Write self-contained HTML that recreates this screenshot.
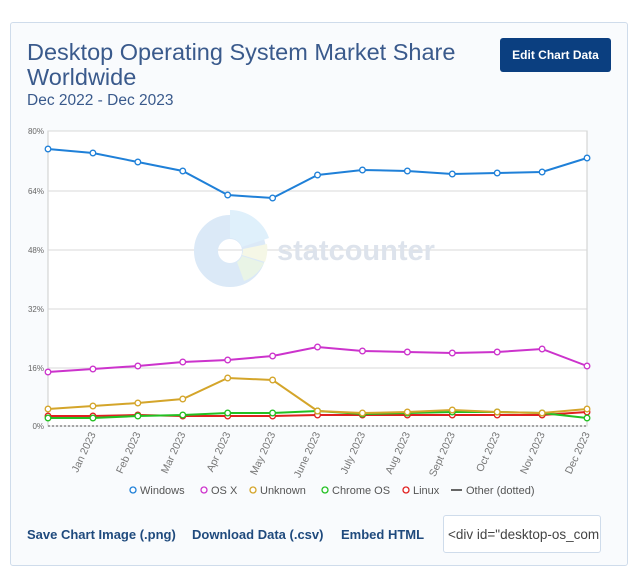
<!DOCTYPE html>
<html><head><meta charset="utf-8"><style>
body{margin:0;width:640px;height:576px;background:#fff;font-family:"Liberation Sans",sans-serif;position:relative;overflow:hidden}
.card{position:absolute;left:10px;top:22px;width:616px;height:542px;background:#f9fbfd;border:1px solid #cfdceb;border-radius:3px}
h1{position:absolute;left:27px;top:40px;margin:0;font-weight:normal;font-size:23.5px;line-height:25px;color:#3a5a8c;width:460px}
.sub{position:absolute;left:27px;top:92px;font-size:15.5px;color:#3a5a8c}
.btn{position:absolute;left:500px;top:38px;width:111px;height:34px;background:#0b3f80;border-radius:3px;color:#fff;font-weight:bold;font-size:12px;line-height:34px;text-align:center}
.lnk{position:absolute;top:527px;font-weight:bold;font-size:13px;color:#1f4a7d}
.emb{position:absolute;left:443px;top:515px;width:158px;height:38px;background:#fff;border:1px solid #cfdceb;border-radius:3px;font-size:13.5px;color:#444;line-height:38px;padding-left:4px;overflow:hidden;white-space:nowrap;box-sizing:border-box}
svg{position:absolute;left:0;top:0}
</style></head><body>
<div class="card"></div>
<h1>Desktop Operating System Market Share Worldwide</h1>
<div class="sub">Dec 2022 - Dec 2023</div>
<div class="btn">Edit Chart Data</div>
<svg id="s" width="640" height="576" font-family="Liberation Sans, sans-serif"></svg>
<div class="lnk" style="left:27px">Save Chart Image (.png)</div>
<div class="lnk" style="left:192px">Download Data (.csv)</div>
<div class="lnk" style="left:341px">Embed HTML</div>
<div class="emb">&lt;div id="desktop-os_comb</div>
<script>
var s='';
s+='<rect x="48" y="131" width="539" height="295" fill="#fff" stroke="#ccc"/>';
[[80,131],[64,191],[48,250],[32,309],[16,368],[0,426]].forEach(function(g){
 s+='<line x1="48" x2="587" y1="'+g[1]+'" y2="'+g[1]+'" stroke="#d8d8d8"/>';
 s+='<text x="44" y="'+(g[1]+3)+'" font-size="8" fill="#666" text-anchor="end">'+g[0]+'%</text>';});
s+='<circle cx="230" cy="251" r="24" fill="none" stroke="#dbe9f7" stroke-width="24"/>';
s+='<path d="M230 210 A41 41 0 0 1 269 238 L242 247 A13 13 0 0 0 230 238Z" fill="#dff0fb"/>';
s+='<path d="M267 244 A37 37 0 0 1 265 262 L242 255 A13 13 0 0 0 243 249Z" fill="#f5f7e6"/>';
s+='<path d="M264 263 A37 37 0 0 1 244 281 L237 262 A13 13 0 0 0 242 256Z" fill="#e9f4e6"/>';
s+='<text x="277" y="260" font-size="29" font-weight="bold" fill="#dde3ec">statcounter</text>';
s+='<line x1="48" x2="587" y1="426" y2="426" stroke="#888" stroke-dasharray="2,2" stroke-width="1.5"/>';
var X=function(i){return 48+i*44.92};
var series=[
['#e02020',[416,416,415,416,416,416,415,415,415,415,415,415,412]],
['#22c022',[418,418,416,415,413,413,411,414,413,412,412,413,418]],
['#d4a52a',[409,406,403,399,378,380,411,413,412,410,412,413,409]],
['#cc33cc',[372,369,366,362,360,356,347,351,352,353,352,349,366]],
['#1f80d8',[149,153,162,171,195,198,175,170,171,174,173,172,158]]];
series.forEach(function(se){
 var p=se[1].map(function(y,i){return X(i).toFixed(1)+','+y}).join(' ');
 s+='<polyline points="'+p+'" fill="none" stroke="'+se[0]+'" stroke-width="2"/>';
 se[1].forEach(function(y,i){s+='<circle cx="'+X(i)+'" cy="'+y+'" r="2.8" fill="#fff" stroke="'+se[0]+'" stroke-width="1.3"/>';});
});
var m=['Jan 2023','Feb 2023','Mar 2023','Apr 2023','May 2023','June 2023','July 2023','Aug 2023','Sept 2023','Oct 2023','Nov 2023','Dec 2023'];
m.forEach(function(t,i){var x=X(i+1)+3,y=434;
 s+='<text x="'+x+'" y="'+y+'" font-size="10.5" fill="#777" text-anchor="end" transform="rotate(-65 '+x+' '+y+')">'+t+'</text>';});
var L=[['Windows','#1f80d8',133],['OS X','#cc33cc',204],['Unknown','#d4a52a',253],['Chrome OS','#22c022',325],['Linux','#e02020',406]];
L.forEach(function(l){s+='<circle cx="'+l[2]+'" cy="490" r="3" fill="#fff" stroke="'+l[1]+'" stroke-width="1.3"/><text x="'+(l[2]+7)+'" y="494" font-size="11" fill="#555">'+l[0]+'</text>';});
s+='<line x1="451" x2="462" y1="490" y2="490" stroke="#666" stroke-width="2"/><text x="466" y="494" font-size="11" fill="#555">Other (dotted)</text>';
document.getElementById('s').innerHTML=s;
</script>
</body></html>
